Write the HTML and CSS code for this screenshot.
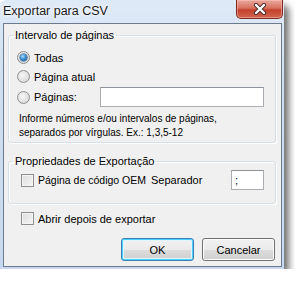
FILE: index.html
```html
<!DOCTYPE html>
<html lang="pt">
<head>
  <meta charset="UTF-8" />
  <title>Exportar para CSV</title>
  <link rel="stylesheet" href="styles.css">
</head>
<body>
  <div class="window">
    <div class="titlebar">
      <span class="title">Exportar para CSV</span>
      <button class="close" aria-label="Fechar">
        <svg width="16" height="12" viewBox="0 0 16 12">
          <path d="M4 2 L12 10 M12 2 L4 10" stroke="#4a2a26" stroke-width="4.2" stroke-linecap="round"/>
          <path d="M4 2 L12 10 M12 2 L4 10" stroke="#fff" stroke-width="2.4" stroke-linecap="round"/>
        </svg>
      </button>
    </div>

    <div class="client">
      <fieldset class="group group-pages">
        <legend>Intervalo de páginas</legend>
        <label class="row row-first">
          <span class="radio checked"></span>Todas
        </label>
        <label class="row">
          <span class="radio"></span>Página atual
        </label>
        <div class="row row-input">
          <label class="row-label"><span class="radio"></span>Páginas:</label>
          <input class="textbox" type="text">
        </div>
        <p class="hint">Informe números e/ou intervalos de páginas,<br>separados por vírgulas. Ex.: 1,3,5-12</p>
      </fieldset>

      <fieldset class="group group-props">
        <legend>Propriedades de Exportação</legend>
        <div class="row row-input">
          <label class="row-label oem-label"><span class="check"></span>Página de código OEM</label>
          <span class="sep-label">Separador</span>
          <input class="textbox sep-box" type="text" value=";">
        </div>
      </fieldset>

      <label class="row open-after">
        <span class="check"></span>Abrir depois de exportar
      </label>

      <div class="buttons">
        <button class="btn btn-default">OK</button>
        <button class="btn">Cancelar</button>
      </div>
    </div>
  </div>
</body>
</html>
```

FILE: styles.css
```css
body {
  margin: 0;
  background: #fff;
  font-family: 'Liberation Sans', Arial, sans-serif;
  font-size: 11px;
  color: #000;
}
.window {
  width: 284px;
  height: 269px;
  box-sizing: border-box;
  padding: 0 2px 2px 3px;
  background: linear-gradient(#dfeaf7, #cfdff2 30%, #c6d9f0);
  border-radius: 6px 6px 0 0;
  box-shadow: 5px 5px 7px rgba(0, 0, 0, 0.55);
  display: flex;
  flex-direction: column;
}
.titlebar {
  height: 23px;
  display: flex;
  align-items: flex-start;
  justify-content: space-between;
}
.title {
  font-size: 12.5px;
  margin-top: 4px;
  color: #1a1a1a;
  text-shadow: 0 0 6px #fff, 0 0 3px #fff;
}
.close {
  width: 47px;
  height: 19px;
  margin-right: -1px;
  padding: 0;
  border: 1px solid #7c2a20;
  border-top: none;
  border-radius: 0 0 5px 5px;
  background: linear-gradient(#e9a99c, #d8705f 45%, #c4412d 55%, #d2654c);
  box-shadow: inset 0 0 0 1px rgba(255, 200, 190, 0.5);
  display: flex;
  align-items: center;
  justify-content: center;
}
.client {
  flex: 1;
  background: #f0f0f0;
  border: 1px solid #6d7b8c;
  display: flex;
  flex-direction: column;
}
.group {
  margin: 5px 5px 0 4px;
  padding: 0 11px 0 8px;
  border: 1px solid #d5dfe5;
  border-radius: 3px;
  box-shadow: inset 1px 1px #fff, 1px 1px #fff;
  box-sizing: border-box;
}
.group legend {
  padding: 0 2px;
  margin-left: -4px;
  line-height: 13px;
}
.group-pages {
  height: 114px;
}
.group-props {
  margin-top: 12px;
  height: 49px;
}
.row {
  display: flex;
  align-items: center;
  gap: 4px;
  height: 19px;
  white-space: nowrap;
}
.row-first {
  margin-top: 6px;
}
.row-label {
  display: flex;
  align-items: center;
  gap: 4px;
}
.row-input {
  height: 20px;
}
.group-pages .row-input {
  margin-top: 1px;
}
.textbox {
  height: 20px;
  box-sizing: border-box;
  border: 1px solid #abadb3;
  border-top-color: #8e939b;
  background: #fff;
  font: inherit;
  padding: 0 3px;
  margin-left: auto;
  width: 164px;
}
.hint {
  margin: 5px 0 0 2px;
  line-height: 14px;
  font-size: 10px;
}
.radio {
  width: 13px;
  height: 13px;
  box-sizing: border-box;
  border-radius: 50%;
  border: 1px solid #8d8f90;
  background: radial-gradient(circle at 40% 40%, #f6f6f6, #dcdcdc 70%, #cfcfcf);
  position: relative;
  flex: none;
}
.radio.checked::after {
  content: "";
  position: absolute;
  left: 2px;
  top: 2px;
  width: 7px;
  height: 7px;
  border-radius: 50%;
  background: radial-gradient(circle at 40% 35%, #a8dcfb, #3a8fd0 45%, #1b5a92 90%);
  box-shadow: 0 0 0 0.5px #1d4e7a;
}
.check {
  width: 13px;
  height: 13px;
  box-sizing: border-box;
  border: 1px solid #8f8f8f;
  background: linear-gradient(135deg, #dcdcdc, #f6f6f6);
  box-shadow: inset 0 0 0 1px #f4f4f4;
  flex: none;
}
.group-props .row-input {
  margin: 2px 0 0 4px;
}
.oem-label {
  font-size: 10.5px;
}
.sep-label {
  margin-left: 1px;
}
.sep-box {
  width: 33px;
}
.open-after {
  margin: 5px 0 0 17px;
}
.buttons {
  display: flex;
  justify-content: flex-end;
  gap: 8px;
  margin: 10px 6px 0 0;
}
.btn {
  width: 73px;
  height: 23px;
  border: 1px solid #707070;
  border-radius: 3px;
  background: linear-gradient(#f2f2f2, #ebebeb 50%, #dddddd 50%, #cfcfcf);
  box-shadow: inset 0 0 0 1px #fcfcfc;
  font: inherit;
  padding: 0;
}
.btn-default {
  border-color: #3c7fb1;
  box-shadow: inset 0 0 0 1px #48d0ff, inset 0 0 0 2px #e2f4fc;
}
```
